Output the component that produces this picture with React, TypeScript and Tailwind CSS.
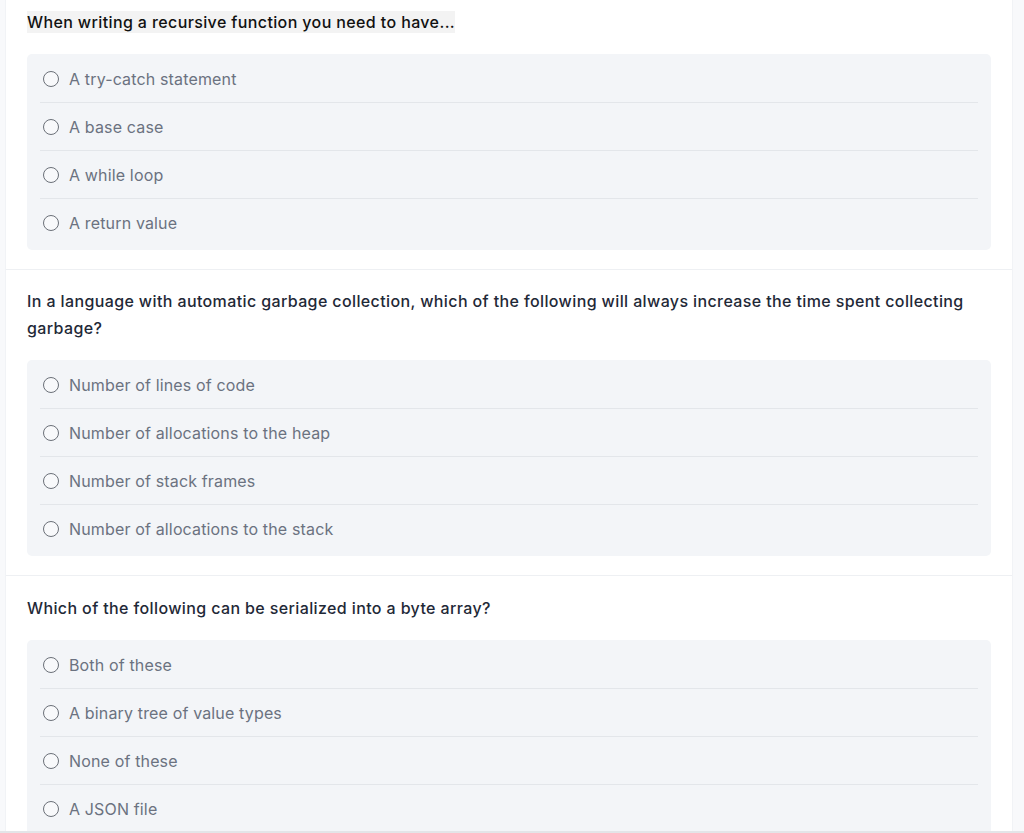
import React from "react";

type Q = { title: string; options: string[]; highlight?: boolean; pt: string };

const questions: Q[] = [
  {
    title: "When writing a recursive function you need to have...",
    options: ["A try-catch statement", "A base case", "A while loop", "A return value"],
    highlight: true,
    pt: "pt-[9px]",
  },
  {
    title:
      "In a language with automatic garbage collection, which of the following will always increase the time spent collecting garbage?",
    options: [
      "Number of lines of code",
      "Number of allocations to the heap",
      "Number of stack frames",
      "Number of allocations to the stack",
    ],
    pt: "pt-[18px]",
  },
  {
    title: "Which of the following can be serialized into a byte array?",
    options: ["Both of these", "A binary tree of value types", "None of these", "A JSON file"],
    pt: "pt-[19px]",
  },
];

function Question({ q }: { q: Q }) {
  return (
    <section className={`${q.pt} pb-[19px] px-[21px] border-b border-[#eef0f3]`}>
      <h2 className="text-[16px] leading-[27px] font-medium mb-[18px] tracking-[0.38px]">
        {q.highlight ? (
          <span className="bg-[#f3f3f3] text-[#111111] py-[1px]">{q.title}</span>
        ) : (
          <span className="text-[#1f2937]">{q.title}</span>
        )}
      </h2>
      <div className="bg-[#f3f5f8] rounded-[5px] px-[13px] pt-[1px] pb-[3px]">
        {q.options.map((o, i) => (
          <label
            key={o}
            className={`flex items-center h-[48px] pl-[3px] gap-[10px] ${
              i < q.options.length - 1 ? "border-b border-[#e3e6ea]" : ""
            }`}
          >
            <span className="w-[16px] h-[16px] rounded-full border-[1.5px] border-[#6b7078] bg-white/40 shrink-0" />
            <span className="text-[16px] text-[#6b7280] tracking-[0.15px]">{o}</span>
          </label>
        ))}
      </div>
    </section>
  );
}

export default function App() {
  return (
    <div
      className="h-[833px] flex flex-col bg-[#f8f9fb] overflow-hidden"
      style={{ fontFamily: "Inter, 'Noto Sans', sans-serif" }}
    >
      <div className="flex-1 overflow-hidden flex">
        <div className="w-[6px] shrink-0 border-r border-[#f1f3f6]" />
        <main className="w-[1006px] bg-white shrink-0">
          {questions.map((q) => (
            <Question key={q.title} q={q} />
          ))}
        </main>
        <div className="flex-1 border-l border-[#f1f3f6]" />
      </div>
      <div className="h-[2px] bg-[#e3e5e8] shrink-0" />
    </div>
  );
}
